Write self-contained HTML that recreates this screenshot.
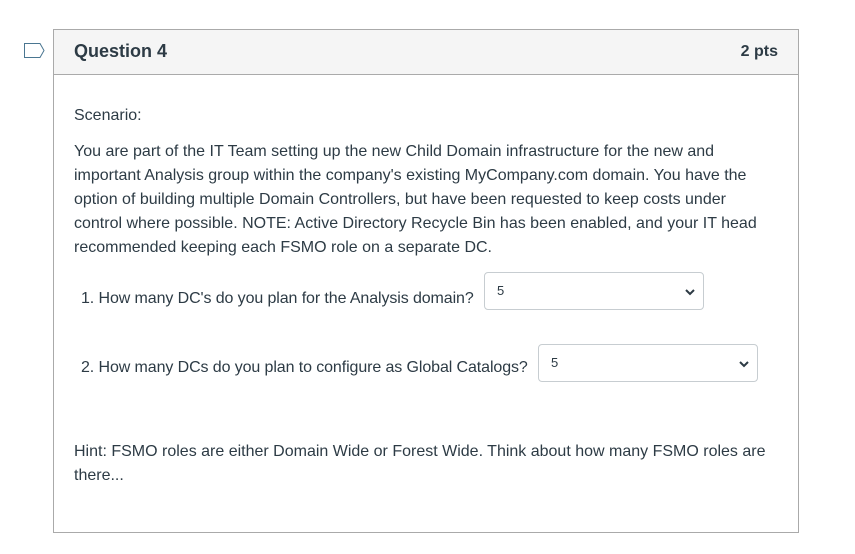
<!DOCTYPE html>
<html><head><style>
body{margin:0;background:#fff;font-family:"Liberation Sans",sans-serif;color:#2d3b45;width:855px;height:554px;position:relative;overflow:hidden}
.box{position:absolute;left:53px;top:29px;width:744px;height:502px;border:1px solid #aaa}
.hdr{height:44px;background:#f5f5f5;border-bottom:1px solid #aaa;position:relative}
.hdr .t{position:absolute;left:20px;top:11px;font-weight:bold;font-size:18px}
.hdr .p{position:absolute;right:20px;top:13px;font-weight:bold;font-size:16px;color:#2d3b45}
.t1{position:absolute;left:74px;font-size:16px;line-height:24px;width:700px}
.sel{position:absolute;height:38px;width:220px;border:1px solid #c7cdd1;border-radius:4px;background:#fff;box-sizing:border-box;font-size:13px;padding:10px 0 0 12px}
.sel svg{position:absolute;right:8px;top:16px}
</style></head><body>
<svg style="position:absolute;left:24px;top:43px" width="21" height="16"><path d="M0.5 0.5H16L20 7.5L16 14.5H0.5Z" fill="none" stroke="#4a7691" stroke-width="1"/></svg>
<div class="box"><div class="hdr"><span class="t">Question 4</span><span class="p">2 pts</span></div></div>
<div class="t1" style="top:104px">Scenario:</div>
<div class="t1" style="top:140px">You are part of the IT Team setting up the new Child Domain infrastructure for the new and important Analysis group within the company's existing MyCompany.com domain. You have the option of building multiple Domain Controllers, but have been requested to keep costs under control where possible. NOTE: Active Directory Recycle Bin has been enabled, and your IT head recommended keeping each FSMO role on a separate DC.</div>
<div class="t1" style="top:287px;left:81px;letter-spacing:-0.1px">1. How many DC's do you plan for the Analysis domain?</div>
<div class="sel" style="left:484px;top:272px">5<svg width="10" height="7"><path d="M1 1L5 5L9 1" fill="none" stroke="#2d3b45" stroke-width="2"/></svg></div>
<div class="t1" style="top:356px;left:81px;letter-spacing:-0.1px">2. How many DCs do you plan to configure as Global Catalogs?</div>
<div class="sel" style="left:538px;top:344px">5<svg width="10" height="7"><path d="M1 1L5 5L9 1" fill="none" stroke="#2d3b45" stroke-width="2"/></svg></div>
<div class="t1" style="top:440px">Hint: FSMO roles are either Domain Wide or Forest Wide. Think about how many FSMO roles are there...</div>
</body></html>
